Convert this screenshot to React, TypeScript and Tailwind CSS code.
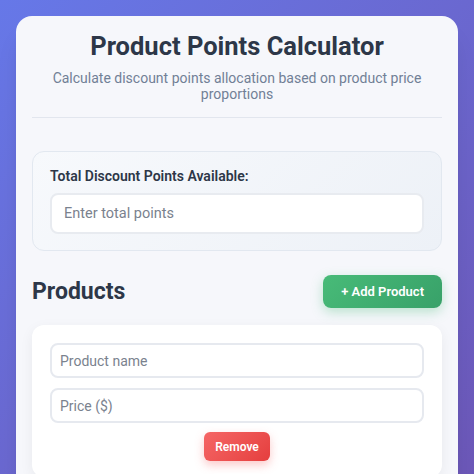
export default function App() {
  return (
    <div
      className="min-h-screen bg-linear-135 from-[#6678e8] to-[#6c56b6] p-4"
      style={{ fontFamily: "Roboto, 'Liberation Sans', sans-serif" }}
    >
      <div className="rounded-2xl bg-[#f6f7fb] px-4 pt-4 pb-6 shadow-xl">
        {/* Header */}
        <div className="border-b border-[#e2e6ee] pb-[15px] text-center">
          <h1 className="text-[25.5px] leading-[28px] font-bold text-[#2d3748]">
            Product Points Calculator
          </h1>
          <p className="mt-[10px] px-5 text-[14px] leading-[16px] text-[#718096]">
            Calculate discount points allocation based on product price proportions
          </p>
        </div>

        {/* Total points */}
        <div className="mt-[33px] rounded-xl border border-[#e2e8f0] bg-linear-135 from-[#f7f9fc] to-[#edf1f7] px-[17px] pt-4 pb-4">
          <label className="block text-[14px] leading-[17px] font-semibold text-[#2d3748]">
            Total Discount Points Available:
          </label>
          <input
            type="number"
            placeholder="Enter total points"
            className="mt-2 h-[41px] w-full rounded-lg border-2 border-[#e8ebf0] bg-white px-3 text-[14.5px] text-[#2d3748] placeholder-[#7a828e] outline-none"
          />
        </div>

        {/* Products header */}
        <div className="mt-[24px] flex items-center justify-between">
          <h2 className="text-[23px] leading-[30px] font-bold text-[#2d3748]">Products</h2>
          <button className="h-[33px] rounded-lg bg-linear-135 from-[#48bb78] to-[#38a169] px-[18px] text-[13px] font-semibold text-white shadow-[0_4px_12px_rgba(72,187,120,0.35)]">
            + Add Product
          </button>
        </div>

        {/* Product card */}
        <div className="mt-[17px] rounded-xl bg-white px-[18px] pt-[18px] pb-4 shadow-[0_4px_14px_rgba(0,0,0,0.06)]">
          <div className="flex flex-col gap-[10px]">
            <input
              type="text"
              placeholder="Product name"
              className="h-[35px] w-full rounded-lg border-2 border-[#e6e9ef] px-2 text-[14px] placeholder-[#7a828e] outline-none"
            />
            <input
              type="number"
              placeholder="Price ($)"
              className="h-[35px] w-full rounded-lg border-2 border-[#e6e9ef] px-2 text-[14px] placeholder-[#7a828e] outline-none"
            />
          </div>
          <div className="mt-[9px] flex justify-center">
            <button className="h-[29px] rounded-md bg-linear-135 from-[#f56565] to-[#e53e3e] px-[11px] text-[12px] font-semibold text-white shadow-[0_4px_10px_rgba(245,101,101,0.35)]">
              Remove
            </button>
          </div>
        </div>
      </div>
    </div>
  );
}
